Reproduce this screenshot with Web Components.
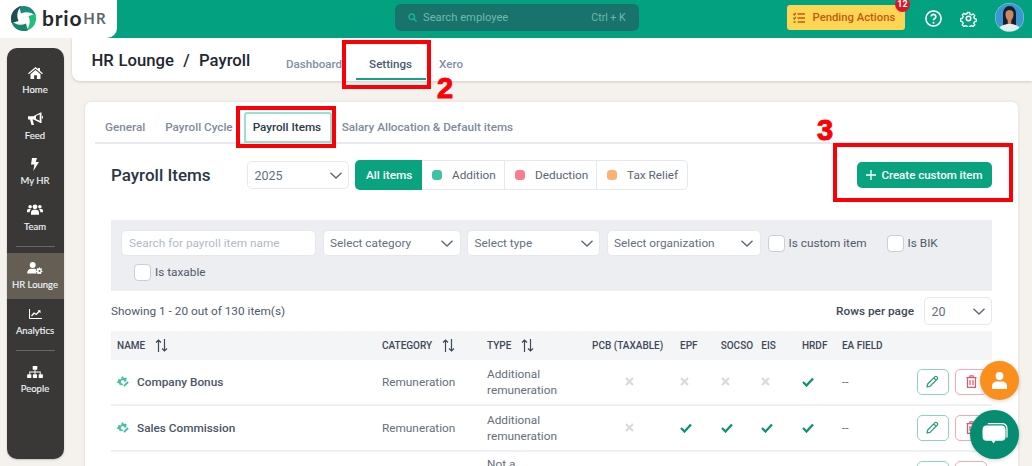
<!DOCTYPE html>
<html lang="en">
<head>
<meta charset="utf-8">
<title>Payroll Items</title>
<style>
  html, body { margin: 0; height: 100%; overflow: hidden; background: #f5f2ee; }
  body { font-family: Roboto, "Liberation Sans", sans-serif; }
</style>
</head>
<body>
<hr-app></hr-app>
<script>
const chevron = /* html */`<svg width="12" height="7" viewBox="0 0 12 7" fill="none" stroke="#5b6675" stroke-width="1.3"><path d="M.5.7L6 6l5.500-5.300"/></svg>`;

class HrBrand extends HTMLElement {
    constructor () {
        super();
        const blade = 'M9 1.800A12.500 12.500 0 0 1 25.900 11.500C22.500 7.500 16.500 6 11 8.500 10.500 6 9.800 3.800 9 1.800z';
        this.attachShadow({ mode: 'open' }).innerHTML = /* html */`
        <style>
            :host { display: flex; align-items: center; width: 117px; height: 38px; box-sizing: border-box; padding-left: 10px; background: #fff; border-bottom-right-radius: 10px; }
            svg { flex: none; margin-top: -2px; }
            b { margin-left: 5px; margin-top: -3px; font: 700 21px/1 Lato, sans-serif; letter-spacing: .8px; color: #23282c; }
            span { margin-left: 1px; margin-top: -1px; font: 700 15px/1 Lato, sans-serif; letter-spacing: 1px; color: #5f666c; }
        </style>
        <svg width="27" height="27" viewBox="0 0 27 27">
            <path d="${blade}" fill="#1a8b78"/>
            <path d="${blade}" fill="#1ec07c" transform="rotate(90 13.500 13.500)"/>
            <path d="${blade}" fill="#17876a" transform="rotate(180 13.500 13.500)"/>
            <path d="${blade}" fill="#1d4f52" transform="rotate(270 13.500 13.500)"/>
        </svg>
        <b>brio</b><span>HR</span>`;
    }
}
customElements.define('hr-brand', HrBrand);

class HrTopbar extends HTMLElement {
    constructor () {
        super();
        this.attachShadow({ mode: 'open' }).innerHTML = /* html */`
        <style>
            :host { display: flex; align-items: center; height: 38px; background: #03a17f; position: relative; }
            .search { position: absolute; left: 394.500px; top: 4px; width: 244px; height: 27px; box-sizing: border-box; padding: 0 13px; display: flex; align-items: center; gap: 6.500px; background: #17736b; border-radius: 6px; color: #74b8ab; font-size: 11.200px; }
            .search span:last-child { margin-left: auto; font-size: 10.500px; }
            .right { margin-left: auto; display: flex; align-items: center; }
            .pending { position: relative; width: 118px; height: 25.500px; box-sizing: border-box; margin-top: -3px; display: flex; align-items: center; gap: 8px; padding-left: 5.500px; background: #ffd654; border-radius: 3px; color: #bf5a13; font-size: 11.300px; font-weight: 500; }
            .badge { position: absolute; right: -5px; top: -8px; width: 15px; height: 15px; border-radius: 50%; background: #d9152a; color: #fff; font-size: 9px; font-weight: 700; display: flex; align-items: center; justify-content: center; }
            .help { margin-left: 20px; margin-top: -2px; }
            .gear { margin-left: 17.500px; margin-top: -2px; }
            .avatar { margin-left: 18.500px; margin-right: 8px; margin-top: -3px; }
        </style>
        <hr-brand></hr-brand>
        <div class="search">
            <svg width="9" height="9" viewBox="0 0 11 11" fill="none" stroke="#1bb493" stroke-width="1.800"><circle cx="4.500" cy="4.500" r="3.400"/><path d="M7 7l3.500 3.500"/></svg>
            <span>Search employee</span><span>Ctrl + K</span>
        </div>
        <div class="right">
            <div class="pending">
                <svg width="12" height="12" viewBox="0 0 12 12" fill="none" stroke="#bf5a13" stroke-width="1.300"><path d="M4.500 2H12M4.500 6H12M4.500 10H12M.3 2l1 1 1.500-2M.3 6l1 1 1.500-2M.5 10h2"/></svg>
                <span>Pending Actions</span>
                <span class="badge">12</span>
            </div>
            <svg class="help" width="17" height="17" viewBox="0 0 17 17" fill="none" stroke="#fff" stroke-width="1.500"><circle cx="8.500" cy="8.500" r="7.600"/><path d="M6.200 6.600a2.300 2.300 0 1 1 3.500 2c-.8.500-1.200.9-1.200 1.700" stroke-width="1.700"/><circle cx="8.500" cy="12.700" r="1" fill="#fff" stroke="none"/></svg>
            <svg class="gear" width="17" height="17" viewBox="0 0 24 24" fill="none" stroke="#fff" stroke-width="2.200" stroke-linejoin="round"><circle cx="12" cy="12" r="3.200"/><path d="M10 2h4l.6 3 2.500 1.100 2.600-1.700 2.800 2.800-1.700 2.600 1.100 2.500 3 .6v0l-.1 3.900-2.900.7-1.100 2.500 1.700 2.600-2.800 2.800-2.600-1.700-2.500 1.100-.6 2.200h-4l-.6-2.200-2.500-1.100-2.600 1.700-2.800-2.800 1.700-2.600-1.100-2.500-2.900-.7V11.900l3-.6 1.100-2.500-1.700-2.600 2.800-2.800 2.600 1.700 2.500-1.100z" transform="translate(1.800 1.800) scale(.85)"/></svg>
            <svg class="avatar" width="29" height="29" viewBox="0 0 29 29">
                <defs><clipPath id="a"><circle cx="14.500" cy="14.500" r="14"/></clipPath></defs>
                <circle cx="14.500" cy="14.500" r="14.500" fill="#9fd3dc"/>
                <g clip-path="url(#a)">
                    <rect width="29" height="29" fill="#3a97d4"/>
                    <path d="M8 22V11c0-5 3-8 6.500-8S21 6 21 11v11z" fill="#16202b"/>
                    <path d="M10.500 11c0-3 2-4 4-4s4 1 4 4c0 4-2 7-4 7s-4-3-4-7z" fill="#c98a62"/>
                    <rect x="12.700" y="16" width="3.600" height="5" fill="#c98a62"/>
                    <path d="M3 29c0-6 6-8 11.500-8S26 23 26 29z" fill="#e6edf0"/>
                </g>
            </svg>
        </div>`;
    }
}
customElements.define('hr-topbar', HrTopbar);

class SideItem extends HTMLElement {
    constructor () {
        super();
        this.attachShadow({ mode: 'open' }).innerHTML = /* html */`
        <style>
            :host { display: flex; flex-direction: column; align-items: center; height: 45.500px; box-sizing: border-box; padding-top: 7px; color: #fff; }
            :host([active]) { background: #645e54; }
            .icon { height: 16px; display: flex; align-items: center; }
            .label { margin-top: 3px; font: 400 9.500px/12px Lato, sans-serif; color: #eef3f6; -webkit-text-stroke: .15px #eef3f6; white-space: nowrap; }
        </style>
        <div class="icon"><slot name="icon"></slot></div>
        <div class="label"><slot></slot></div>`;
    }
}
customElements.define('side-item', SideItem);

class HrSidebar extends HTMLElement {
    constructor () {
        super();
        this.attachShadow({ mode: 'open' }).innerHTML = /* html */`
        <style>
            :host { display: block; flex: none; width: 57px; height: 411px; box-sizing: border-box; margin: 10px 0 0 6.500px; padding-top: 10px; background: #3a3836; border-radius: 10px; box-shadow: 0 1px 2px rgba(0,0,0,.2); }
            hr { border: 0; height: 1px; margin: 6px 9px; background: #6b675f; }
            svg { display: block; fill: #fff; }
        </style>
        <side-item><svg slot="icon" width="15" height="12" viewBox="0 0 16 13"><path d="M8 0l2.700 2.300V1h2.100v3.100L16 6.800l-.8 1L8 1.900.8 7.800 0 6.800z"/><path d="M8 3.300l5.400 4.500V13H9.500V9h-3v4H2.600V7.800z"/></svg>Home</side-item>
        <side-item><svg slot="icon" width="15" height="13" viewBox="0 0 15 13"><path d="M0 4.200h5.300L12.500 .5h1v10.500h-1L5.500 7.500H4.600L6 13H3.500L2 7.500H0z"/><path d="M8 4l3.700-1.800v6.600L8 7.100z" fill="#3a3836"/><path d="M14 3.500c.7.400 1 1 1 1.800s-.3 1.400-1 1.800z"/></svg>Feed</side-item>
        <side-item><svg slot="icon" width="8" height="13" viewBox="0 0 8 13"><path d="M1 0h5L4.700 4H8L2.300 13l1.100-6.500H0z"/></svg>My HR</side-item>
        <side-item><svg slot="icon" width="16" height="11" viewBox="0 0 18 12"><circle cx="9" cy="3" r="2.700"/><path d="M4.500 12V9.300C4.500 7.500 6 6.400 7.500 6.400h3c1.500 0 3 1.100 3 2.900V12z"/><circle cx="3.500" cy="3" r="2"/><circle cx="14.500" cy="3" r="2"/><path d="M0 9V7.300c0-1 .8-1.800 1.800-1.800h2c.3 0 .5 0 .7.100-.9.700-1.500 2-1.500 3.400zM18 9V7.300c0-1-.8-1.800-1.800-1.800h-2c-.3 0-.5 0-.7.100.9.700 1.500 2 1.500 3.400z"/></svg>Team</side-item>
        <hr>
        <side-item active><svg slot="icon" width="16" height="12" viewBox="0 0 17 13"><circle cx="6" cy="3.200" r="3.200"/><path d="M0 12.500c0-3.500 2-5.300 4.500-5.300h3c1 0 1.800.3 2.500.8-.6 1.300-.6 3 .2 4.500z"/><path d="M13.500 6.300l1 .2.300 1 .9.400.8-.5.800 1.100-.6.800.2 1 1 .3-.2 1.300-1 .1-.6.900.4.900-1.200.7-.7-.7-1 0-.7.700-1.200-.7.400-.9-.6-.9-1-.1v-1.300l1-.3.200-1-.6-.8.800-1.100.8.500.9-.4.300-1z" transform="translate(-.5 -.5) scale(.96)"/><circle cx="13.400" cy="9.700" r="1.100" fill="#645e54"/></svg>HR Lounge</side-item>
        <side-item><svg slot="icon" width="13" height="10" viewBox="0 0 13 10" fill="none" stroke="#fff" style="fill:none"><path d="M.5 0v9.500H13" stroke-width="1"/><path d="M2.500 7l2.500-3 2.200 1.500L10.500 2" stroke-width="1.300"/><path d="M8.500 1.200h3v3z" fill="#fff" stroke="none"/></svg>Analytics</side-item>
        <hr>
        <side-item><svg slot="icon" width="16" height="12" viewBox="0 0 17 13"><rect x="6" width="5" height="4" rx=".6"/><rect y="9" width="4.500" height="4" rx=".6"/><rect x="6.200" y="9" width="4.500" height="4" rx=".6"/><rect x="12.500" y="9" width="4.500" height="4" rx=".6"/><path d="M8 4h1v2h5.700v3h-1V7H9v2H8V7H3.300v2h-1V6H8z"/></svg>People</side-item>`;
    }
}
customElements.define('hr-sidebar', HrSidebar);

class PageHead extends HTMLElement {
    constructor () {
        super();
        this.attachShadow({ mode: 'open' }).innerHTML = /* html */`
        <style>
            :host { display: flex; align-items: stretch; height: 43px; box-sizing: border-box; padding-left: 19.500px; background: #fff; border-bottom-left-radius: 8px; box-shadow: 0 1px 3px rgba(60,50,40,.2); }
            h1 { flex: none; width: 182.500px; margin: 0; font-size: 16.700px; font-weight: 500; line-height: 43px; word-spacing: .5px; color: #1f2733; white-space: pre; position: relative; top: 1px; }
            a { display: block; padding: 0 12px; margin-right: 2px; font-size: 11.600px; font-weight: 500; line-height: 52px; color: #8190a3; }
            a.on { position: relative; box-sizing: border-box; width: 70px; padding-left: 13px; color: #4a5a6e; margin-right: 1px; }
            a.on::after { content: ""; position: absolute; left: 0; right: 0; bottom: 1px; height: 2px; background: #14a386; }
        </style>
        <h1>HR Lounge  /  Payroll</h1>
        <a>Dashboard</a><a class="on">Settings</a><a>Xero</a>`;
    }
}
customElements.define('page-head', PageHead);

class SubTabs extends HTMLElement {
    constructor () {
        super();
        this.attachShadow({ mode: 'open' }).innerHTML = /* html */`
        <style>
            :host { display: flex; height: 32px; box-sizing: border-box; margin: 0 10px; border-bottom: 2px solid #e8eaef; color: #7f8b9c; font-size: 11.700px; font-weight: 500; }
            a { display: flex; align-items: center; padding: 0 10px 1px; box-sizing: border-box; height: 31px; white-space: nowrap; }
            a.on { margin-left: 1px; padding: 0 8px 1px 7px; width: 88px; color: #2b3a4c; border: 2px solid #9adfcf; border-radius: 3px 3px 0 0; }
        </style>
        <a>General</a><a>Payroll Cycle</a><a class="on">Payroll Items</a><a>Salary Allocation &amp; Default items</a>`;
    }
}
customElements.define('sub-tabs', SubTabs);

class FilterSelect extends HTMLElement {
    static get observedAttributes () { return ['label']; }
    constructor () {
        super();
        this.attachShadow({ mode: 'open' }).innerHTML = /* html */`
        <style>
            :host { display: flex; align-items: center; justify-content: space-between; box-sizing: border-box; height: 26px; padding: 0 6.500px; background: #fff; border: 1px solid #e6e8ee; border-radius: 5px; font-size: 11.800px; color: #646f7e; white-space: nowrap; }
            svg { display: block; }
        </style>
        <span></span>${chevron}`;
    }
    attributeChangedCallback (name, oV, nV) {
        this.shadowRoot.querySelector('span').textContent = nV || '';
    }
}
customElements.define('filter-select', FilterSelect);

class CheckOption extends HTMLElement {
    constructor () {
        super();
        this.attachShadow({ mode: 'open' }).innerHTML = /* html */`
        <style>
            :host { display: flex; align-items: center; gap: 4px; height: 26px; font-size: 11.800px; color: #4e5a6a; white-space: nowrap; }
            i { display: block; box-sizing: border-box; width: 17px; height: 17px; background: #fff; border: 1.500px solid #c9ced7; border-radius: 4px; }
        </style>
        <i></i><slot></slot>`;
    }
}
customElements.define('check-option', CheckOption);

class PayrollRow extends HTMLElement {
    static get observedAttributes () { return ['name', 'category', 'type', 'flags']; }
    constructor () {
        super();
        this.attachShadow({ mode: 'open' }).innerHTML = /* html */`
        <style>
            :host { display: grid; grid-template-columns: var(--cols); align-items: center; height: 45.800px; box-sizing: border-box; border-bottom: 2px solid #eff0f3; font-size: 11.800px; line-height: 16px; color: #646f7e; }
            :host > div { padding-left: 6px; min-width: 0; }
            .name { display: flex; align-items: center; gap: 8px; font-weight: 500; color: #4a5564; }
            .flag { display: flex; }
            .pcb { padding-left: 39px !important; }
            .acts { display: flex; gap: 6.500px; }
            button { width: 32px; height: 26px; padding: 0; display: flex; align-items: center; justify-content: center; background: #fff; border: 1.300px solid #8dd3c2; border-radius: 5px; flex: none; }
            button.del { border-color: #f6a9b3; }
            svg { display: block; }
        </style>
        <div class="name"></div><div class="cat"></div><div class="type"></div>
        <div class="flag pcb"></div><div class="flag"></div><div class="flag"></div><div class="flag"></div><div class="flag"></div>
        <div class="ea"></div>
        <div class="acts">
            <button><svg width="13" height="13" viewBox="0 0 13 13" fill="none" stroke="#2a9a82" stroke-width="1.200" stroke-linejoin="round"><path d="M1 12l.7-3L9 1.700a1.200 1.200 0 0 1 1.700 0l.6.6a1.200 1.200 0 0 1 0 1.700L4 11.300zM7.800 3l2.200 2.200"/></svg></button>
            <button class="del"><svg width="11" height="13" viewBox="0 0 11 13" fill="none" stroke="#e8566c" stroke-width="1.200"><path d="M.5 2.700h10M3.500 2.500L4 .8h3l.5 1.700M1.500 2.700V12.300h8V2.700M4 5v5M7 5v5"/></svg></button>
        </div>`;
    }
    attributeChangedCallback () {
        this.update();
    }
    update() {
        const $ = sel => this.shadowRoot.querySelector(sel);
        const nombre = this.getAttribute('name');
        $('.name').innerHTML = nombre ? `<svg width="12" height="12" viewBox="0 0 13 12"><path fill="#43bfa3" d="M5 0h1.800l.3 1.300 1.100.5 1.200-.7 1.200 1.200-.7 1.200.4 1-2 2-.3-1.300a2 2 0 1 0-2.300 2.600l1.300.3-1.200 1.400-.7-.3-1 .6-.3-.9-1.400-.1-.2-1.400L.2 7l.1-1.700L1.500 5 1 3.800l1.200-1.300 1.200.7 1.200-.5z"/><path d="M7.500 10.500l4.500-4.500" stroke="#43bfa3" stroke-width="2"/></svg><span></span>` : '';
        if (nombre) $('.name span').textContent = nombre;
        $('.cat').textContent = this.getAttribute('category') || '';
        $('.type').textContent = this.getAttribute('type') || '';
        $('.ea').textContent = nombre ? '--' : '';
        const flags = this.getAttribute('flags') || '';
        this.shadowRoot.querySelectorAll('.flag').forEach((el, i) => {
            const v = flags[i];
            if (v === '1') el.innerHTML = `<svg width="12" height="10" viewBox="0 0 12 10" fill="none" stroke="#0a9273" stroke-width="2.300"><path d="M1 5l3.500 3.500L11 1.500"/></svg>`;
            else if (v === '0') el.innerHTML = `<svg width="9" height="9" viewBox="0 0 9 9" fill="none" stroke="#d6dae0" stroke-width="2"><path d="M1 1l7 7M8 1L1 8"/></svg>`;
            else el.innerHTML = '';
        });
        const acts = $('.acts');
        acts.style.alignSelf = nombre ? '' : 'start';
        acts.style.marginTop = nombre ? '' : '9px';
        $('.type').style.alignSelf = nombre ? '' : 'start';
        $('.type').style.marginTop = nombre ? '' : '4px';
    }
}
customElements.define('payroll-row', PayrollRow);

class PayrollTable extends HTMLElement {
    constructor () {
        super();
        this.attachShadow({ mode: 'open' }).innerHTML = /* html */`
        <style>
            :host { display: block; --cols: 265px 105px 105px 88px 40.670px 40.670px 40.660px 40px 75px 81px; }
            .head { display: grid; grid-template-columns: var(--cols); align-items: center; height: 29px; background: #f4f5f7; font-size: 10px; font-weight: 500; color: #3d4858; white-space: nowrap; }
            .head > div { padding-left: 6px; display: flex; align-items: center; gap: 10px; }
            svg { display: block; }
        </style>
        <div class="head">
            <div>NAME ${PayrollTable.sort}</div><div>CATEGORY ${PayrollTable.sort}</div><div>TYPE ${PayrollTable.sort}</div>
            <div>PCB (TAXABLE)</div><div>EPF</div><div>SOCSO</div><div>EIS</div><div>HRDF</div><div>EA FIELD</div><div></div>
        </div>
        <slot></slot>`;
    }
    static get sort () {
        return `<svg width="13" height="13" viewBox="0 0 13 13" fill="none" stroke="#3d4858" stroke-width="1.200"><path d="M3.500 13V1M1 3.500L3.500 1 6 3.500M9.500 0v12M7 9.500L9.500 12 12 9.500"/></svg>`;
    }
}
customElements.define('payroll-table', PayrollTable);

class PayrollPanel extends HTMLElement {
    constructor () {
        super();
        this.attachShadow({ mode: 'open' }).innerHTML = /* html */`
        <style>
            :host { display: block; height: 420px; box-sizing: border-box; padding-top: 10px; margin: 21px 14px 0 13px; background: #fff; border-radius: 6px 6px 0 0; box-shadow: 0 0 3px rgba(60,50,40,.12); }
            .body { padding: 16px 26px 0 26px; }
            .top { display: flex; align-items: center; height: 30px; }
            h2 { margin: 0; flex: none; width: 136px; font-size: 17px; font-weight: 500; line-height: 1; color: #2b3645; }
            .year { width: 102px; height: 28px; font-size: 12.500px; }
            .seg { display: flex; height: 30px; margin-left: 6px; font-size: 11.800px; border: 1px solid #e6e8ee; border-left: 0; border-radius: 5px; box-sizing: border-box; color: #5a6676; }
            .seg span { display: flex; align-items: center; gap: 10px; padding-left: 10px; box-sizing: border-box; border-right: 1px solid #e6e8ee; white-space: nowrap; }
            .seg span:last-child { border-right: 0; }
            .seg i { width: 10px; height: 10px; border-radius: 3.500px; }
            .seg .all { width: 67px; margin: -1px 0; height: 30px; padding-left: 11px; background: #0aa380; color: #fff; border-radius: 5px 0 0 5px; border: 0; font-weight: 500; }
            .create { margin-left: auto; width: 135px; height: 26px; display: flex; align-items: center; justify-content: center; gap: 5px; background: #0aa380; color: #fff; border-radius: 5px; font-size: 11.500px; font-weight: 500; white-space: nowrap; }
            .filters { display: flex; flex-wrap: wrap; align-items: center; column-gap: 6.500px; row-gap: 3px; margin-top: 30px; height: 71px; box-sizing: border-box; padding: 10px; background: #eceef1; align-content: flex-start; }
            input { box-sizing: border-box; width: 195px; height: 26px; padding: 0 7px; border: 1px solid #e6e8ee; border-radius: 5px; font: inherit; font-size: 11.800px; background: #fff; }
            input::placeholder { color: #b3bac4; }
            .taxable { margin-left: 13px; }
            .meta { display: flex; align-items: center; justify-content: space-between; height: 28px; margin: 6px 0; font-size: 11.800px; color: #4e5a6a; }
            .rows { display: flex; align-items: center; gap: 10px; font-weight: 500; color: #3d4858; }
            .rows filter-select { width: 68px; height: 28px; font-weight: 400; font-size: 12.500px; }
        </style>
        <sub-tabs></sub-tabs>
        <div class="body">
            <div class="top">
                <h2>Payroll Items</h2>
                <filter-select class="year" label="2025"></filter-select>
                <div class="seg">
                    <span class="all">All items</span>
                    <span style="width:83px"><i style="background:#3fc1a3"></i>Addition</span>
                    <span style="width:92px"><i style="background:#fb7c8c"></i>Deduction</span>
                    <span style="width:90px"><i style="background:#fdb274"></i>Tax Relief</span>
                </div>
                <div class="create">
                    <svg width="10" height="10" viewBox="0 0 10 10" stroke="#fff" stroke-width="1.300"><path d="M5 0v10M0 5h10"/></svg>
                    <span>Create custom item</span>
                </div>
            </div>
            <div class="filters">
                <input placeholder="Search for payroll item name">
                <filter-select style="width:138px" label="Select category"></filter-select>
                <filter-select style="width:133px" label="Select type"></filter-select>
                <filter-select style="width:154px" label="Select organization"></filter-select>
                <check-option style="margin-left:.5px;margin-right:13.500px">Is custom item</check-option>
                <check-option>Is BIK</check-option>
                <check-option class="taxable">Is taxable</check-option>
            </div>
            <div class="meta">
                <span>Showing 1 - 20 out of 130 item(s)</span>
                <div class="rows"><span>Rows per page</span><filter-select label="20"></filter-select></div>
            </div>
            <payroll-table>
                <payroll-row name="Company Bonus" category="Remuneration" type="Additional remuneration" flags="00001"></payroll-row>
                <payroll-row name="Sales Commission" category="Remuneration" type="Additional remuneration" flags="01111"></payroll-row>
                <payroll-row type="Not a"></payroll-row>
            </payroll-table>
        </div>`;
    }
}
customElements.define('payroll-panel', PayrollPanel);

// Recuadros rojos de la captura, van encima del contenido
class RedBox extends HTMLElement {
    constructor () {
        super();
        this.attachShadow({ mode: 'open' }).innerHTML = /* html */`
        <style>
            :host { position: absolute; box-sizing: border-box; border: 4px solid #fb0007; pointer-events: none; }
        </style>`;
    }
}
customElements.define('red-box', RedBox);

class RedNumber extends HTMLElement {
    constructor () {
        super();
        this.attachShadow({ mode: 'open' }).innerHTML = /* html */`
        <style>
            :host { position: absolute; font: 700 29px/1 "Liberation Sans", sans-serif; color: #fb0007; -webkit-text-stroke: 1px #fb0007; }
        </style>
        <slot></slot>`;
    }
}
customElements.define('red-number', RedNumber);

class FloatButtons extends HTMLElement {
    constructor () {
        super();
        this.attachShadow({ mode: 'open' }).innerHTML = /* html */`
        <style>
            :host { position: absolute; left: 970px; top: 361px; width: 60px; height: 105px; }
            div { position: absolute; display: flex; align-items: center; justify-content: center; border-radius: 50%; box-shadow: 0 1px 4px rgba(0,0,0,.18); }
            .user { left: 10px; top: 0; width: 39px; height: 39px; background: #fb8f1e; }
            .chat { left: 0; top: 49px; width: 49px; height: 49px; background: #068c70; }
        </style>
        <div class="user"><svg width="15" height="17" viewBox="0 0 15 17" fill="#fff"><circle cx="7.500" cy="4" r="3.900"/><path d="M0 17v-3C0 11 2.500 9.500 4.500 9.500h6c2 0 4.500 1.500 4.500 4.500v3z"/></svg></div>
        <div class="chat"><svg width="26" height="23" viewBox="0 0 27 24"><path d="M6 .7h14.500c3.500 0 5.500 2 5.500 5.500v9" fill="none" stroke="#fff" stroke-width="1.300"/><path d="M4.500 2.500h16c2.400 0 4 1.600 4 4v8c0 2.400-1.600 4-4 4H14l-2 3-2-3H4.500c-2.400 0-4-1.600-4-4v-8c0-2.400 1.600-4 4-4z" fill="#fff"/></svg></div>`;
    }
}
customElements.define('float-buttons', FloatButtons);

class HrApp extends HTMLElement {
    constructor () {
        super();
        this.attachShadow({ mode: 'open' }).innerHTML = /* html */`
        <style>
            :host { display: block; position: relative; width: 1032px; height: 466px; overflow: hidden; background: #f5f2ee; }
            .layout { display: flex; height: 428px; }
            main { flex: 1; min-width: 0; margin-left: 8.500px; }
        </style>
        <hr-topbar></hr-topbar>
        <div class="layout">
            <hr-sidebar></hr-sidebar>
            <main>
                <page-head></page-head>
                <payroll-panel></payroll-panel>
            </main>
        </div>
        <float-buttons></float-buttons>
        <red-box style="left:342px;top:40px;width:89px;height:49px"></red-box>
        <red-box style="left:236px;top:106px;width:100px;height:42px"></red-box>
        <red-box style="left:833px;top:143px;width:180px;height:59px"></red-box>
        <red-number style="left:437px;top:74px">2</red-number>
        <red-number style="left:817px;top:116px">3</red-number>`;
    }
}
customElements.define('hr-app', HrApp);
</script>
</body>
</html>
